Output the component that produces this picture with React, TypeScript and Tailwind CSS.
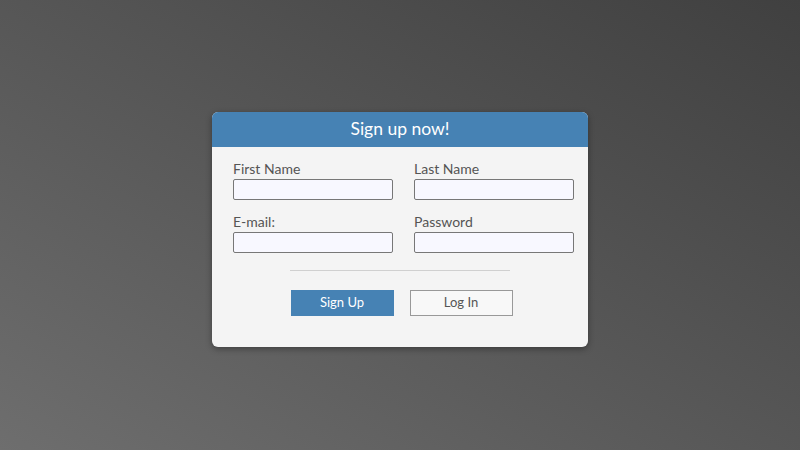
import React from "react";

const fields = [
  { label: "First Name", type: "text" },
  { label: "Last Name", type: "text" },
  { label: "E-mail:", type: "email" },
  { label: "Password", type: "password" },
];

export default function App() {
  return (
    <div
      className="w-[800px] h-[450px] flex items-start justify-center bg-gradient-to-tr from-[#6e6e6e] to-[#404040] pt-[112px]"
      style={{ fontFamily: "Lato, 'Noto Sans', sans-serif" }}
    >
      <div className="w-[376px] rounded-md bg-[#f4f4f4] shadow-[0_2px_6px_rgba(0,0,0,0.35)] overflow-hidden">
        <div className="h-[35px] bg-[#4682b4] text-white text-[17.5px] flex items-center justify-center">
          Sign up now!
        </div>

        <div className="pt-[13px] pb-[31px]">
          <div className="grid grid-cols-[181px_181px] gap-y-[13px] pl-[21px]">
            {fields.map((f) => (
              <label key={f.label} className="flex flex-col text-[14px] leading-[17px] text-[#555]">
                <span className="mb-[2px]">{f.label}</span>
                <input
                  type={f.type}
                  className="w-[160px] h-[21px] border border-[#777] rounded-[2px] bg-[#f8f8ff] outline-none"
                />
              </label>
            ))}
          </div>

          <div className="w-[220px] h-px bg-[#d0d0d0] mx-auto mt-[17px] mb-[19px]" />

          <div className="flex justify-center gap-[16px] pl-[3px]">
            <button className="w-[103px] h-[26px] bg-[#4682b4] text-white text-[13px]">
              Sign Up
            </button>
            <button className="w-[103px] h-[26px] border border-[#999] bg-[#f8f8f8] text-[#555] text-[13px]">
              Log In
            </button>
          </div>
        </div>
      </div>
    </div>
  );
}
